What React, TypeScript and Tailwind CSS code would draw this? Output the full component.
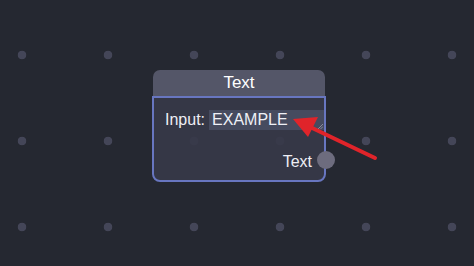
export default function App() {
  return (
    <div className="relative w-[474px] h-[266px] overflow-hidden bg-[#252831] bg-[radial-gradient(circle,#444658_4px,transparent_4.6px)] bg-[size:86px_86px] bg-[position:-21px_12px] font-['Liberation_Sans',Arial,sans-serif]">
      <div className="absolute left-[152px] top-[70px] w-[174px]">
        <div className="h-[26px] mx-[1px] rounded-t-[7px] bg-[#545668] flex items-center justify-center text-white text-[17px]">
          Text
        </div>
        <div className="relative h-[86px] rounded-b-[8px] border-2 border-[#6876c0] bg-[#373949]/90 flex flex-col">
          <div className="flex items-center mt-[10px] pl-[11px]">
            <span className="text-[16px] text-[#eeeef4] mr-[4px]">Input:</span>
            <div className="relative h-[20px] w-[115px] bg-[#464b5f] text-[16px] leading-[20px] text-[#eef0f6] pl-[3px]">
              EXAMPLE
              <svg className="absolute right-[1px] bottom-[1px]" width="6" height="6" viewBox="0 0 6 6">
                <path d="M1 6L6 1M3.5 6L6 3.5" stroke="#9a9cb0" strokeWidth="0.8" />
              </svg>
            </div>
          </div>
          <div className="flex items-center justify-end mt-[18px] pr-[12px]">
            <span className="text-[16px] text-[#eeeef4]">Text</span>
          </div>
          <div className="absolute right-[-11px] top-[53px] w-[18px] h-[18px] rounded-full bg-[#6d6c7e]" />
        </div>
      </div>
      <svg className="absolute left-0 top-0" width="474" height="266" viewBox="0 0 474 266">
        <line x1="375" y1="158" x2="308" y2="126" stroke="#e0242a" strokeWidth="4" strokeLinecap="round" />
        <polygon points="293,119 318,117 308,137" fill="#e0242a" />
      </svg>
    </div>
  )
}
